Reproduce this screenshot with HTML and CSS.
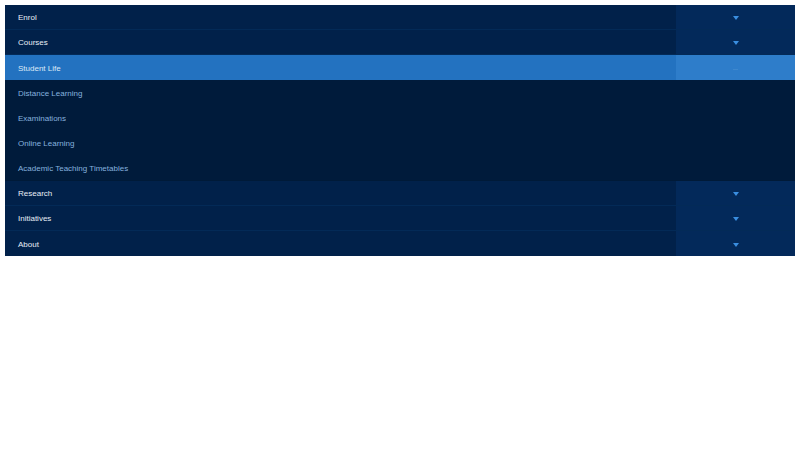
FILE: index.html
```html
<!DOCTYPE html>
<html>
<head>
<meta charset="utf-8">
<link rel="stylesheet" href="styles.css">
</head>
<body>
<nav class="menu">
  <div class="item">
    <a class="label">Enrol</a>
    <span class="toggle"><span class="caret"></span></span>
  </div>
  <div class="item">
    <a class="label">Courses</a>
    <span class="toggle"><span class="caret"></span></span>
  </div>
  <div class="item open">
    <a class="label">Student Life</a>
    <span class="toggle"><span class="caret up"></span></span>
  </div>
  <ul class="sub">
    <li>Distance Learning</li>
    <li>Examinations</li>
    <li>Online Learning</li>
    <li>Academic Teaching Timetables</li>
  </ul>
  <div class="item">
    <a class="label">Research</a>
    <span class="toggle"><span class="caret"></span></span>
  </div>
  <div class="item">
    <a class="label">Initiatives</a>
    <span class="toggle"><span class="caret"></span></span>
  </div>
  <div class="item last">
    <a class="label">About</a>
    <span class="toggle"><span class="caret"></span></span>
  </div>
</nav>
</body>
</html>
```
FILE: styles.css
```css
html, body { margin: 0; padding: 0; background: #fff; }
body { padding: 5px; font-family: "Liberation Sans", Arial, sans-serif; font-size: 8px; }
.menu { width: 790px; background: #01214a; }
.item { display: flex; height: 25px; border-bottom: 1px solid #032a57; box-sizing: border-box; }
.item.last { border-bottom: none; }
.label { flex: 1; display: flex; align-items: center; padding: 1px 0 0 13px; color: #e8eef6; }
.toggle { width: 119px; display: flex; align-items: center; justify-content: center; background: #03295a; }
.caret { width: 0; height: 0; border-left: 3.5px solid transparent; border-right: 3.5px solid transparent; border-top: 4px solid #3a8ee0; margin-top: 2px; }
.caret.up { width: 5px; height: 1px; border: none; background: #4a90d0; opacity: 0.6; margin-top: 4px; }
.item.open { background: #2372c0; border-bottom: none; }
.item.open .label { color: #dce9f7; }
.item.open .toggle { background: #2e7dca; }
.sub { list-style: none; margin: 0; padding: 0; background: #001b3b; border-bottom: 1px solid #001a38; }
.sub li { height: 25px; display: flex; align-items: center; padding: 1px 0 0 13px; box-sizing: border-box; color: #86b2df; }
```
